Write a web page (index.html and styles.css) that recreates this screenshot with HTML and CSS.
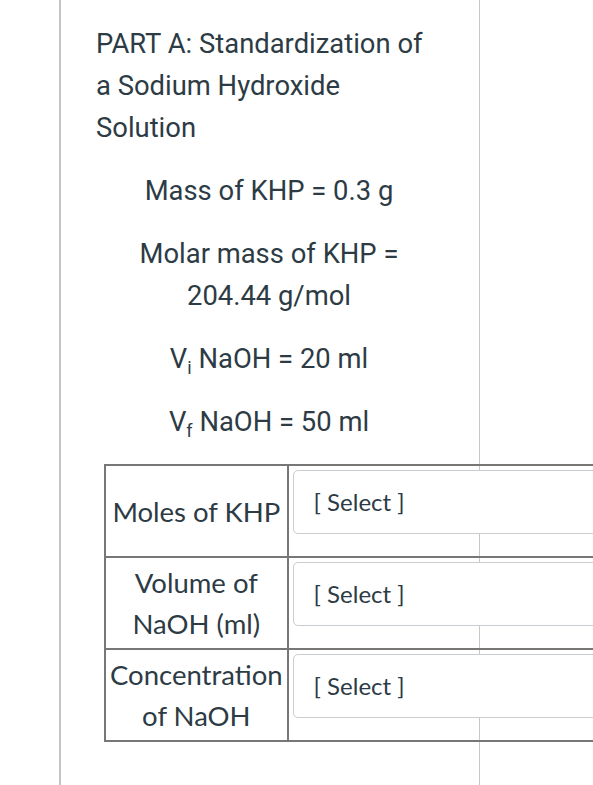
FILE: index.html
```html
<!DOCTYPE html>
<html>
<head>
<meta charset="utf-8">
<link rel="stylesheet" href="styles.css">
</head>
<body>
<div class="column">
  <p class="heading">PART A: Standardization of a Sodium Hydroxide Solution</p>
  <p class="center">Mass of KHP = 0.3 g</p>
  <p class="center">Molar mass of KHP = 204.44 g/mol</p>
  <p class="center">V<sub>i</sub> NaOH = 20 ml</p>
  <p class="center">V<sub>f</sub> NaOH = 50 ml</p>
  <table class="data">
    <tr>
      <td class="label">Moles of KHP</td>
      <td class="field"><div class="select">[ Select ]</div></td>
    </tr>
    <tr>
      <td class="label">Volume of NaOH (ml)</td>
      <td class="field"><div class="select">[ Select ]</div></td>
    </tr>
    <tr>
      <td class="label">Concentration of NaOH</td>
      <td class="field"><div class="select">[ Select ]</div></td>
    </tr>
  </table>
</div>
</body>
</html>
```

FILE: styles.css
```css
html, body {
  margin: 0;
  padding: 0;
  background: #ffffff;
  overflow: hidden;
}
body {
  width: 593px;
  height: 785px;
}
.column {
  margin-left: 59px;
  width: 346px;
  min-height: 785px;
  box-sizing: content-box;
  border-left: 2px solid #c4c4c4;
  border-right: 1px solid #c8c8c8;
  padding: 23px 37px 0 35px;
  color: #2d3b45;
  font-family: Roboto, "Liberation Sans", sans-serif;
  font-size: 27.4px;
  line-height: 42px;
}
.column p {
  margin: 0 0 21px 0;
}
.heading {
  text-align: left;
}
.center {
  text-align: center;
}
sub {
  font-size: 18px;
  line-height: 0;
  vertical-align: -6px;
}
.data {
  border-collapse: collapse;
  margin-left: 8px;
  margin-top: 0;
  width: 600px;
  font-family: Lato, "Liberation Sans", sans-serif;
  font-size: 27.5px;
  line-height: 41px;
  color: #2d3b45;
}
.data td {
  border: 2px solid #777777;
  padding: 4px;
  vertical-align: middle;
}
.label {
  width: 182px;
  box-sizing: border-box;
  text-align: center;
  padding: 5px 0;
}
.field {
  vertical-align: top;
}
.select {
  width: 330px;
  height: 64px;
  box-sizing: border-box;
  margin-bottom: 18px;
  border: 1px solid #c7cdd1;
  border-radius: 5px;
  background: #ffffff;
  padding-left: 20px;
  display: flex;
  align-items: center;
  font-size: 24px;
  line-height: 30px;
}
```
